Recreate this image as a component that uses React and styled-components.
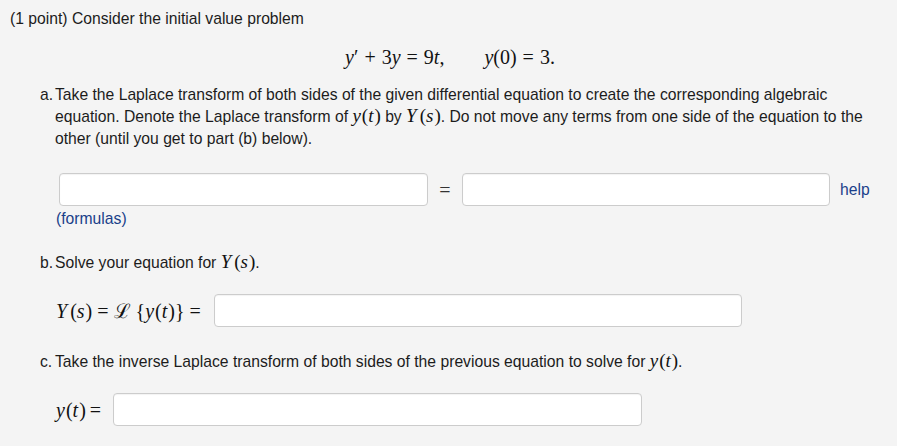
import React from "react";
import styled, { createGlobalStyle } from "styled-components";

const GlobalStyle = createGlobalStyle`
  html, body {
    margin: 0;
    padding: 0;
    background: #f4f4f4;
  }
  body {
    font-family: "Liberation Sans", Arial, sans-serif;
    font-size: 15.7px;
    color: #1c1c1c;
  }
`;

const Page = styled.div`
  width: 897px;
  height: 446px;
  box-sizing: border-box;
  padding: 8px 17px 0 10px;
  overflow: hidden;
`;

const Line = styled.div`
  line-height: 22px;
`;

const Display = styled.div`
  display: flex;
  justify-content: center;
  gap: 40px;
  margin-top: 14px;
  height: 26px;
  align-items: center;
  padding-left: 10px;
`;

const Math = styled.span`
  font-family: "Liberation Serif", "DejaVu Serif", serif;
  font-size: ${p => p.size || 20}px;
  line-height: 1;
  color: #111;
  white-space: nowrap;
`;

const V = styled.i`
  font-style: italic;
  margin-right: ${p => p.kern || 0}px;
`;

const Op = styled.span`
  margin: 0 ${p => p.space ?? 5}px;
`;

const Part = styled.div`
  display: grid;
  grid-template-columns: 15px 1fr;
  margin-left: 30px;
  margin-top: ${p => p.top}px;
  line-height: 22px;
`;

const Marker = styled.span``;

const Body = styled.div``;

const AnswerRow = styled.div`
  display: flex;
  align-items: center;
  margin-top: ${p => p.top}px;
  margin-left: ${p => p.indent || 0}px;
`;

const Input = styled.input`
  box-sizing: border-box;
  width: ${p => p.w}px;
  height: 33px;
  background: #fff;
  border: 1px solid #cccccc;
  border-radius: 4px;
  box-shadow: inset 0 1px 1px rgba(0, 0, 0, 0.05);
  padding: 4px 6px;
  outline: none;
`;

const Equals = styled.span`
  font-family: "Liberation Serif", "DejaVu Serif", serif;
  font-size: 20px;
  color: #333;
  width: 34px;
  text-align: center;
`;

const Label = styled.span`
  margin-right: ${p => p.gap}px;
  display: inline-flex;
  align-items: center;
`;

const LinkText = styled.a`
  color: #1a3f8a;
  text-decoration: none;
  cursor: pointer;
  margin-left: ${p => p.left || 0}px;
  line-height: 18px;
  display: inline-block;
`;

const Note = styled.div`
  margin-top: 4px;
  margin-left: 1px;
  line-height: 18px;
`;

const Brace = styled.span`
  margin-left: 5px;
`;

export default function App() {
  return (
    <>
      <GlobalStyle />
      <Page>
        <Line>(1 point) Consider the initial value problem</Line>
        <Display>
          <Math>
            <V>y</V>′<Op space={6}>+</Op>3<V>y</V>
            <Op space={6}>=</Op>9<V>t</V>,
          </Math>
          <Math>
            <V>y</V>(0)<Op space={6}>=</Op>3.
          </Math>
        </Display>

        <Part top={14}>
          <Marker>a.</Marker>
          <Body>
            Take the Laplace transform of both sides of the given differential equation to create the
            corresponding algebraic equation. Denote the Laplace transform of{" "}
            <Math size={19}>
              <V kern={1}>y</V>(<V kern={1}>t</V>)
            </Math>{" "}
            by{" "}
            <Math size={19}>
              <V kern={3}>Y</V>(<V kern={1}>s</V>)
            </Math>
            . Do not move any terms from one side of the equation to the other (until you get to part
            (b) below).
            <AnswerRow top={23} indent={4}>
              <Input w={369} aria-label="left side" />
              <Equals>=</Equals>
              <Input w={368} aria-label="right side" />
              <LinkText left={10}>help</LinkText>
            </AnswerRow>
            <Note>
              <LinkText>(formulas)</LinkText>
            </Note>
          </Body>
        </Part>

        <Part top={24}>
          <Marker>b.</Marker>
          <Body>
            Solve your equation for{" "}
            <Math size={19}>
              <V kern={3}>Y</V>(<V kern={1}>s</V>)
            </Math>
            .
            <AnswerRow top={20} indent={1}>
              <Label gap={8}>
                <Math size={20}>
                  <V kern={3}>Y</V>(<V kern={1}>s</V>)<Op space={5}>=</Op>ℒ
                  <Brace>{"{"}</Brace>
                  <V kern={1}>y</V>(<V kern={1}>t</V>){"}"}
                  <Op space={5}>=</Op>
                </Math>
              </Label>
              <Input w={528} aria-label="Y(s)" />
            </AnswerRow>
          </Body>
        </Part>

        <Part top={24}>
          <Marker>c.</Marker>
          <Body>
            Take the inverse Laplace transform of both sides of the previous equation to solve for{" "}
            <Math size={19}>
              <V kern={1}>y</V>(<V kern={1}>t</V>)
            </Math>
            .
            <AnswerRow top={20} indent={1}>
              <Label gap={8}>
                <Math size={20}>
                  <V kern={1}>y</V>(<V kern={1}>t</V>)<Op space={4}>=</Op>
                </Math>
              </Label>
              <Input w={529} aria-label="y(t)" />
            </AnswerRow>
          </Body>
        </Part>
      </Page>
    </>
  );
}
